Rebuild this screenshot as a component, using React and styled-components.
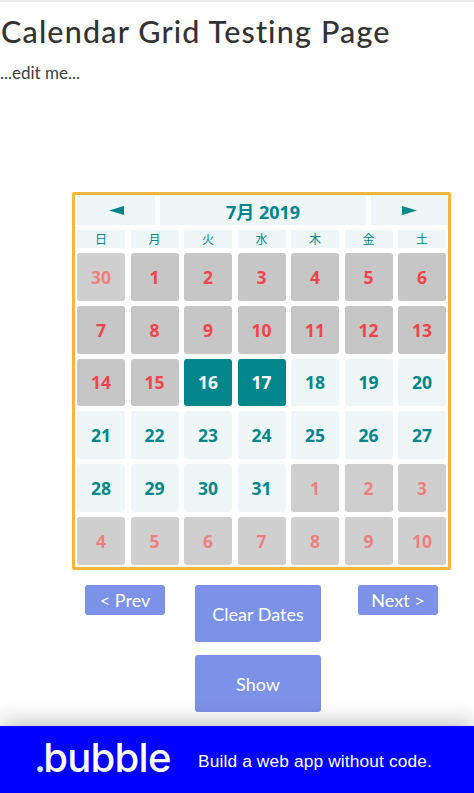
import React from "react";
import styled, { createGlobalStyle } from "styled-components";

const Global = createGlobalStyle`
  html, body { margin: 0; padding: 0; background: #fff; }
  #root { height: 793px; overflow: hidden; }
`;

const Page = styled.div`
  height: 793px;
  display: flex;
  flex-direction: column;
  border-top: 2px solid #ececec;
  box-sizing: border-box;
  font-family: Lato, "Noto Sans", sans-serif;
`;
const Title = styled.h1`
  margin: 10px 0 0 1px;
  font-size: 30.5px;
  line-height: 38px;
  font-weight: 500;
  letter-spacing: 1.17px;
  color: #333;
`;
const Sub = styled.p`
  margin: 12px 0 0 0;
  font-size: 17px;
  line-height: 22px;
  color: #404040;
`;
const Calendar = styled.div`
  box-sizing: border-box;
  margin: 108px 0 0 72px;
  width: 379px;
  height: 378px;
  border: 3px solid #f7b63e;
  border-radius: 2px;
  padding: 1px 0 0 2px;
  display: flex;
  flex-direction: column;
  gap: 5px;
  font-family: "Open Sans", "Noto Sans CJK JP", sans-serif;
`;
const HeaderRow = styled.div`
  display: grid;
  grid-template-columns: 78px 206px 77px;
  gap: 5px;
  height: 29px;
`;
const HeaderCell = styled.div`
  background: #eef6f8;
  color: #00868b;
  display: flex;
  align-items: center;
  justify-content: center;
  font-size: 18px;
  font-weight: 700;
`;
const Arrow = styled.svg`
  width: 15px;
  height: 9px;
  fill: #00868b;
`;
const Week = styled.div`
  display: grid;
  grid-template-columns: repeat(7, 48px);
  column-gap: 5.5px;
`;
const DayName = styled.div`
  height: 18px;
  background: #eef6f8;
  color: #00868b;
  font-size: 12px;
  display: flex;
  align-items: center;
  justify-content: center;
`;
const Grid = styled.div`
  display: grid;
  grid-template-columns: repeat(7, 48px);
  grid-auto-rows: 47.8px;
  gap: 5px 5.5px;
`;
const palette = {
  off: { bg: "#cfcfcf", fg: "#f08080" },
  past: { bg: "#c6c6c6", fg: "#f2444c" },
  sel: { bg: "#00868b", fg: "#ffffff" },
  open: { bg: "#eef6f8", fg: "#00868b" },
};
const Day = styled.div`
  border-radius: 3px;
  display: flex;
  align-items: center;
  justify-content: center;
  font-size: 17.5px;
  font-weight: 700;
  background: ${(p) => palette[p.$kind].bg};
  color: ${(p) => palette[p.$kind].fg};
`;
const Controls = styled.div`
  margin: 15px 0 0 85px;
  width: 353px;
  display: grid;
  grid-template-columns: 110px 163px 80px;
  grid-template-rows: 57px 57px;
  row-gap: 13px;
  align-items: start;
`;
const Button = styled.button`
  border: 0;
  padding: 0;
  border-radius: 3px;
  background: #7c92e8;
  color: #fff;
  font-family: Lato, sans-serif;
  font-size: 18px;
  width: ${(p) => (p.$small ? "80px" : "126px")};
  height: ${(p) => (p.$small ? "30px" : "100%")};
`;
const ShowButton = styled(Button)`
  grid-column: 2;
`;
const Footer = styled.div`
  margin-top: auto;
  height: 67px;
  background: #0000ff;
  box-shadow: 0 -4px 20px rgba(0, 0, 0, 0.25);
  display: flex;
  align-items: center;
  padding-left: 34px;
  color: #fff;
  position: relative;
`;
const Logo = styled.div`
  font-family: Inter, "Liberation Sans", sans-serif;
  font-size: 40px;
  font-weight: 500;
  letter-spacing: -0.7px;
  line-height: 1;
  width: 164px;
  margin-top: -3px;
`;
const Dot = styled.span`
  color: #cfe4ff;
  letter-spacing: -3px;
`;
const Tag = styled.div`
  font-family: "Liberation Sans", Arial, sans-serif;
  font-size: 17.3px;
  letter-spacing: 0.15px;
  margin-top: 3px;
`;

const weekNames = ["日", "月", "火", "水", "木", "金", "土"];
const days = [
  [30, "off"], [1, "past"], [2, "past"], [3, "past"], [4, "past"], [5, "past"], [6, "past"],
  [7, "past"], [8, "past"], [9, "past"], [10, "past"], [11, "past"], [12, "past"], [13, "past"],
  [14, "past"], [15, "past"], [16, "sel"], [17, "sel"], [18, "open"], [19, "open"], [20, "open"],
  [21, "open"], [22, "open"], [23, "open"], [24, "open"], [25, "open"], [26, "open"], [27, "open"],
  [28, "open"], [29, "open"], [30, "open"], [31, "open"], [1, "off"], [2, "off"], [3, "off"],
  [4, "off"], [5, "off"], [6, "off"], [7, "off"], [8, "off"], [9, "off"], [10, "off"],
];

export default function App() {
  return (
    <Page>
      <Global />
      <Title>Calendar Grid Testing Page</Title>
      <Sub>...edit me...</Sub>
      <Calendar>
        <HeaderRow>
          <HeaderCell>
            <Arrow viewBox="0 0 15 9"><path d="M0 4.5 15 0v9z" /></Arrow>
          </HeaderCell>
          <HeaderCell>7月 2019</HeaderCell>
          <HeaderCell>
            <Arrow viewBox="0 0 15 9"><path d="M15 4.5 0 0v9z" /></Arrow>
          </HeaderCell>
        </HeaderRow>
        <Week>
          {weekNames.map((w) => <DayName key={w}>{w}</DayName>)}
        </Week>
        <Grid>
          {days.map(([n, kind], i) => <Day key={i} $kind={kind}>{n}</Day>)}
        </Grid>
      </Calendar>
      <Controls>
        <Button $small>&lt; Prev</Button>
        <Button>Clear Dates</Button>
        <Button $small>Next &gt;</Button>
        <ShowButton>Show</ShowButton>
      </Controls>
      <Footer>
        <Logo><Dot>.</Dot>bubble</Logo>
        <Tag>Build a web app without code.</Tag>
      </Footer>
    </Page>
  );
}
